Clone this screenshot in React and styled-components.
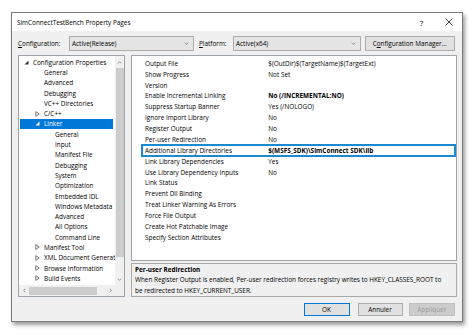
import styled, { createGlobalStyle } from "styled-components";

const GlobalStyle = createGlobalStyle`
  html, body {
    margin: 0;
    background: #ffffff;
  }
  body {
    font-family: "Open Sans", "Noto Sans", sans-serif;
    font-size: 6.4px;
    color: #000;
  }
`;

const Page = styled.div`
  padding: 12px 0 0 11px;
  width: 474px;
  height: 335px;
  box-sizing: border-box;
`;

const Dialog = styled.div`
  width: 452px;
  height: 310px;
  box-sizing: border-box;
  border: 1px solid #7c7c7c;
  box-shadow: 2px 3px 4px rgba(0, 0, 0, 0.4);
  display: flex;
  flex-direction: column;
  background: #f0f0f0;
`;

const TitleBar = styled.div`
  height: 18px;
  background: #ffffff;
  display: flex;
  align-items: center;
  padding: 0 0 0 5px;
`;

const Title = styled.div`
  flex: 1;
  line-height: 18px;
  padding-top: 1px;
`;

const TitleButton = styled.div`
  width: 27px;
  height: 18px;
  display: flex;
  align-items: center;
  justify-content: center;
  font-size: 8px;
`;

const Body = styled.div`
  flex: 1;
  display: flex;
  flex-direction: column;
  padding: 5px 5px 5px 6px;
`;

const ConfigRow = styled.div`
  height: 14.5px;
  display: flex;
  align-items: center;
  margin-bottom: 4.5px;
`;

const Label = styled.span`
  width: ${(p) => p.$width}px;
  margin-left: ${(p) => p.$left || 0}px;
  u {
    text-decoration-thickness: 0.5px;
    text-underline-offset: 1px;
  }
`;

const Combo = styled.div`
  width: ${(p) => p.$width}px;
  height: 14.5px;
  box-sizing: border-box;
  border: 1px solid #adadad;
  background: #e5e5e5;
  display: flex;
  align-items: center;
  padding: 0 4px 0 2px;
  span {
    flex: 1;
  }
`;

const Button = styled.div`
  width: ${(p) => p.$width}px;
  height: ${(p) => p.$height || 13}px;
  margin-left: ${(p) => p.$left || 0}px;
  box-sizing: border-box;
  border: 1px solid ${(p) => (p.$focused ? "#0078d7" : p.$disabled ? "#bfbfbf" : "#adadad")};
  background: ${(p) => (p.$disabled ? "#cccccc" : "#e1e1e1")};
  color: ${(p) => (p.$disabled ? "#9a9a9a" : "#000")};
  display: flex;
  align-items: center;
  justify-content: center;
  u {
    text-decoration-thickness: 0.5px;
    text-underline-offset: 1px;
  }
`;

const Main = styled.div`
  height: 242px;
  display: flex;
  gap: 6px;
`;

const TreePanel = styled.div`
  width: 107px;
  box-sizing: border-box;
  border: 1px solid #9ea3aa;
  background: #ffffff;
  display: grid;
  grid-template-columns: 96px 9px;
  grid-template-rows: 229px 11px;
`;

const TreeList = styled.div`
  overflow: hidden;
  padding-top: 1px;
`;

const TreeRow = styled.div`
  height: 10.3px;
  margin: 0 2px 0 1px;
  display: flex;
  align-items: center;
  padding-left: ${(p) => 3 + p.$level * 11}px;
  white-space: nowrap;
  background: ${(p) => (p.$selected ? "#0078d7" : "transparent")};
  color: ${(p) => (p.$selected ? "#ffffff" : "#000")};
`;

const Expander = styled.span`
  width: 10px;
  flex: none;
  display: flex;
  align-items: center;
  padding-left: 1px;
  box-sizing: border-box;
`;

const VScroll = styled.div`
  background: #f0f0f0;
  display: flex;
  flex-direction: column;
  align-items: center;
`;

const ScrollArrow = styled.div`
  height: ${(p) => p.$size}px;
  width: ${(p) => p.$wide || "100%"};
  display: flex;
  align-items: center;
  justify-content: center;
  flex: none;
`;

const VThumb = styled.div`
  width: 8px;
  height: ${(p) => p.$size}px;
  background: #cdcdcd;
  flex: none;
`;

const HScroll = styled.div`
  background: #f0f0f0;
  display: flex;
  align-items: center;
`;

const HThumb = styled.div`
  width: ${(p) => p.$size}px;
  height: 8px;
  background: #cdcdcd;
  flex: none;
`;

const Spacer = styled.div`
  flex: 1;
`;

const Corner = styled.div`
  background: #f0f0f0;
`;

const RightColumn = styled.div`
  flex: 1;
  display: flex;
  flex-direction: column;
  gap: 2px;
`;

const Grid = styled.div`
  flex: 1;
  box-sizing: border-box;
  border: 1px solid #9ea3aa;
  background: #ffffff;
  padding: 1.9px 1px 0 10px;
`;

const PropRow = styled.div`
  height: 10.875px;
  display: flex;
  align-items: center;
  white-space: nowrap;
  outline: ${(p) => (p.$highlight ? "2px solid #1b8ad3" : "none")};
  outline-offset: -1px;
`;

const PropName = styled.span`
  width: 123.3px;
  padding-left: 3px;
  flex: none;
`;

const PropValue = styled.span`
  font-weight: ${(p) => (p.$bold ? 700 : 400)};
`;

const Description = styled.div`
  height: 34px;
  box-sizing: border-box;
  border: 1px solid #a9a9a9;
  background: #f0f0f0;
  padding: 1px 3px;
  line-height: 10.3px;
`;

const DescTitle = styled.div`
  font-weight: 700;
`;

const DescLine = styled.div`
  white-space: nowrap;
`;

const Footer = styled.div`
  margin-top: 6px;
  display: flex;
  justify-content: flex-end;
  padding-right: 2px;
`;

const Triangle = ({ open, color }) =>
  open ? (
    <svg width="5" height="5" viewBox="0 0 5 5">
      <polygon points="4.5,0.5 4.5,4.5 0.5,4.5" fill={color} />
    </svg>
  ) : (
    <svg width="5" height="6" viewBox="0 0 5 6">
      <polygon points="0.8,0.6 4.2,3 0.8,5.4" fill="none" stroke={color} strokeWidth="0.8" />
    </svg>
  );

const Chevron = ({ dir = "down", size = 5, color = "#606060" }) => {
  const rot = { down: 0, up: 180, left: 90, right: -90 }[dir];
  return (
    <svg width={size} height={size} viewBox="0 0 6 6" style={{ transform: `rotate(${rot}deg)` }}>
      <polyline points="1,2 3,4 5,2" fill="none" stroke={color} strokeWidth="0.8" />
    </svg>
  );
};

const treeItems = [
  { label: "Configuration Properties", level: 0, exp: "open" },
  { label: "General", level: 1 },
  { label: "Advanced", level: 1 },
  { label: "Debugging", level: 1 },
  { label: "VC++ Directories", level: 1 },
  { label: "C/C++", level: 1, exp: "closed" },
  { label: "Linker", level: 1, exp: "open", selected: true },
  { label: "General", level: 2 },
  { label: "Input", level: 2 },
  { label: "Manifest File", level: 2 },
  { label: "Debugging", level: 2 },
  { label: "System", level: 2 },
  { label: "Optimization", level: 2 },
  { label: "Embedded IDL", level: 2 },
  { label: "Windows Metadata", level: 2 },
  { label: "Advanced", level: 2 },
  { label: "All Options", level: 2 },
  { label: "Command Line", level: 2 },
  { label: "Manifest Tool", level: 1, exp: "closed" },
  { label: "XML Document Generator", level: 1, exp: "closed" },
  { label: "Browse Information", level: 1, exp: "closed" },
  { label: "Build Events", level: 1, exp: "closed" },
];

const props = [
  ["Output File", "$(OutDir)$(TargetName)$(TargetExt)"],
  ["Show Progress", "Not Set"],
  ["Version", ""],
  ["Enable Incremental Linking", "No (/INCREMENTAL:NO)", true],
  ["Suppress Startup Banner", "Yes (/NOLOGO)"],
  ["Ignore Import Library", "No"],
  ["Register Output", "No"],
  ["Per-user Redirection", "No"],
  ["Additional Library Directories", "$(MSFS_SDK)\\SimConnect SDK\\lib", true, true],
  ["Link Library Dependencies", "Yes"],
  ["Use Library Dependency Inputs", "No"],
  ["Link Status", ""],
  ["Prevent Dll Binding", ""],
  ["Treat Linker Warning As Errors", ""],
  ["Force File Output", ""],
  ["Create Hot Patchable Image", ""],
  ["Specify Section Attributes", ""],
];

const App = () => {
  return (
    <Page>
      <GlobalStyle />
      <Dialog>
        <TitleBar>
          <Title>SimConnectTestBench Property Pages</Title>
          <TitleButton>?</TitleButton>
          <TitleButton>
            <svg width="8" height="8" viewBox="0 0 8 8">
              <path d="M0.5,0.5 L7.5,7.5 M7.5,0.5 L0.5,7.5" stroke="#111" strokeWidth="0.8" />
            </svg>
          </TitleButton>
        </TitleBar>
        <Body>
          <ConfigRow>
            <Label $width={51}>
              <u>C</u>onfiguration:
            </Label>
            <Combo $width={125}>
              <span>Active(Release)</span>
              <Chevron />
            </Combo>
            <Label $width={34} $left={5}>
              <u>P</u>latform:
            </Label>
            <Combo $width={127.7}>
              <span>Active(x64)</span>
              <Chevron />
            </Combo>
            <Button $width={90} $height={14.5} $left={4}>
              C<u>o</u>nfiguration Manager...
            </Button>
          </ConfigRow>
          <Main>
            <TreePanel>
              <TreeList>
                {treeItems.map((it, i) => (
                  <TreeRow key={i} $level={it.level} $selected={it.selected}>
                    <Expander>
                      {it.exp && (
                        <Triangle
                          open={it.exp === "open"}
                          color={it.selected ? "#ffffff" : it.exp === "open" ? "#333" : "#555"}
                        />
                      )}
                    </Expander>
                    {it.label}
                  </TreeRow>
                ))}
              </TreeList>
              <VScroll>
                <ScrollArrow $size={12}>
                  <Chevron dir="up" />
                </ScrollArrow>
                <VThumb $size={189} />
                <Spacer />
                <ScrollArrow $size={12}>
                  <Chevron dir="down" />
                </ScrollArrow>
              </VScroll>
              <HScroll>
                <ScrollArrow $size={10} $wide="10px">
                  <Chevron dir="left" />
                </ScrollArrow>
                <HThumb $size={68} />
                <Spacer />
                <ScrollArrow $size={10} $wide="10px">
                  <Chevron dir="right" />
                </ScrollArrow>
              </HScroll>
              <Corner />
            </TreePanel>
            <RightColumn>
              <Grid>
                {props.map(([name, value, bold, hl], i) => (
                  <PropRow key={i} $highlight={hl}>
                    <PropName>{name}</PropName>
                    <PropValue $bold={bold}>{value}</PropValue>
                  </PropRow>
                ))}
              </Grid>
              <Description>
                <DescTitle>Per-user Redirection</DescTitle>
                <DescLine>
                  When Register Output is enabled, Per-user redirection forces registry writes to
                  HKEY_CLASSES_ROOT to
                </DescLine>
                <DescLine>be redirected to HKEY_CURRENT_USER.</DescLine>
              </Description>
            </RightColumn>
          </Main>
          <Footer>
            <Button $width={46} $focused>
              OK
            </Button>
            <Button $width={45} $left={8}>
              Annuler
            </Button>
            <Button $width={46.5} $left={6} $disabled>
              Appliquer
            </Button>
          </Footer>
        </Body>
      </Dialog>
    </Page>
  );
};

export default App;
